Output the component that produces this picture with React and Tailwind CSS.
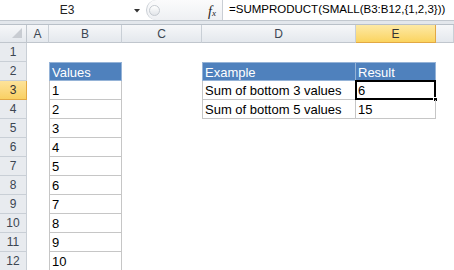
import React from "react";

const cols = ["A", "B", "C", "D", "E", "F"];

function ColHeader({ label, active }) {
  return (
    <div
      className={
        "flex items-center justify-center border-r text-[12px] " +
        (active
          ? "bg-gradient-to-b from-[#fde9a4] to-[#fbd45e] border-[#e2a844] border-b border-b-[#e2a844] text-[#333]"
          : "bg-gradient-to-b from-[#f6f7f9] to-[#e4e8ed] border-[#c9cfd6] border-b border-b-[#c0c6cd] text-[#3c4652]")
      }
    >
      {label === "F" ? "" : label}
    </div>
  );
}

function RowHeader({ n, active }) {
  return (
    <div
      className={
        "flex items-center justify-center border-r border-b text-[12px] " +
        (active
          ? "bg-gradient-to-b from-[#fde39a] to-[#f9d062] border-[#e2a844] text-[#333]"
          : "bg-[#e8ebef] border-[#c9cfd6] text-[#3c4652]")
      }
    >
      {n}
    </div>
  );
}

export default function App() {
  const values = ["1", "2", "3", "4", "5", "6", "7", "8", "9", "10"];
  const rows = Array.from({ length: 12 }, (_, i) => i + 1);

  const cellFor = (r, c) => {
    const base = "flex items-center px-[2px] pt-[1px] text-[13px] text-black leading-none";
    if (c === "B" && r >= 2 && r <= 12) {
      if (r === 2)
        return (
          <div className={base + " bg-[#4f81bd] text-white border border-[#95b3d7]"}>Values</div>
        );
      return (
        <div className={base + " border-x border-b border-[#c6c6c6]"}>{values[r - 3]}</div>
      );
    }
    if ((c === "D" || c === "E") && r >= 2 && r <= 4) {
      const left = c === "D" ? " border-l" : "";
      if (r === 2)
        return (
          <div className={base + " bg-[#4f81bd] text-white border-y border-r border-[#95b3d7]" + left}>
            {c === "D" ? "Example" : "Result"}
          </div>
        );
      const text =
        c === "D"
          ? r === 3
            ? "Sum of bottom 3 values"
            : "Sum of bottom 5 values"
          : r === 3
          ? "6"
          : "15";
      return (
        <div className={base + " relative border-b border-r border-[#c6c6c6]" + left}>
          {text}
          {c === "E" && r === 3 && (
            <>
              <div className="absolute -left-[1px] -top-[1px] w-[81px] h-[20px] border-2 border-black" />
              <div className="absolute -right-[3px] -bottom-[3px] w-[5px] h-[5px] bg-black border border-white" />
            </>
          )}
        </div>
      );
    }
    return <div />;
  };

  return (
    <div className="w-[454px] h-[270px] overflow-hidden bg-white font-['Liberation_Sans',Arial,sans-serif]">
      <div className="flex h-[20px] bg-white">
        <div className="relative w-[146px] flex items-center justify-center text-[12px] text-[#222]">
          <span className="pr-[12px]">E3</span>
          <svg className="absolute left-[134px] top-[9px]" width="6" height="4" viewBox="0 0 6 4">
            <path d="M0 0 L6 0 L3 3.5 Z" fill="#333" />
          </svg>
        </div>
        <div className="relative w-[76px] flex items-center border-l border-[#c9ced4] rounded-l-[10px] bg-gradient-to-b from-[#fbfbfc] to-[#eef0f3]">
          <div className="ml-[2px] w-[11px] h-[11px] rounded-full border border-[#c5cad0] bg-gradient-to-b from-[#ffffff] to-[#e2e5e9]" />
          <span className="absolute left-[61px] top-[1px] text-[14px] italic font-['Liberation_Serif',serif] text-[#222]">
            f<span className="text-[9px]">x</span>
          </span>
        </div>
        <div className="flex-1 flex items-center pl-[6px] border-l border-[#c9ced4] text-[11.5px] text-black whitespace-nowrap">
          =SUMPRODUCT(SMALL(B3:B12,{"{"}1,2,3{"}"}))
        </div>
      </div>
      <div className="h-[5px] border-t border-[#c2c8cf] bg-[#e3e7ec] border-b border-b-[#b9c0c8]" />

      <div className="grid grid-cols-[27px_22px_73px_80px_154px_80px_18px] grid-rows-[18px_repeat(12,19px)]">
        <div className="relative bg-gradient-to-b from-[#f6f7f9] to-[#e4e8ed] border-r border-b border-[#c0c6cd]">
          <svg className="absolute right-[4px] bottom-[4px]" width="10" height="10" viewBox="0 0 10 10">
            <path d="M10 0 L10 10 L0 10 Z" fill="#c8ccd2" />
          </svg>
        </div>
        {cols.map((c) => (
          <ColHeader key={c} label={c} active={c === "E"} />
        ))}
        {rows.map((r) => (
          <React.Fragment key={r}>
            <RowHeader n={r} active={r === 3} />
            {cols.map((c) => (
              <React.Fragment key={c}>{cellFor(r, c)}</React.Fragment>
            ))}
          </React.Fragment>
        ))}
      </div>
    </div>
  );
}
